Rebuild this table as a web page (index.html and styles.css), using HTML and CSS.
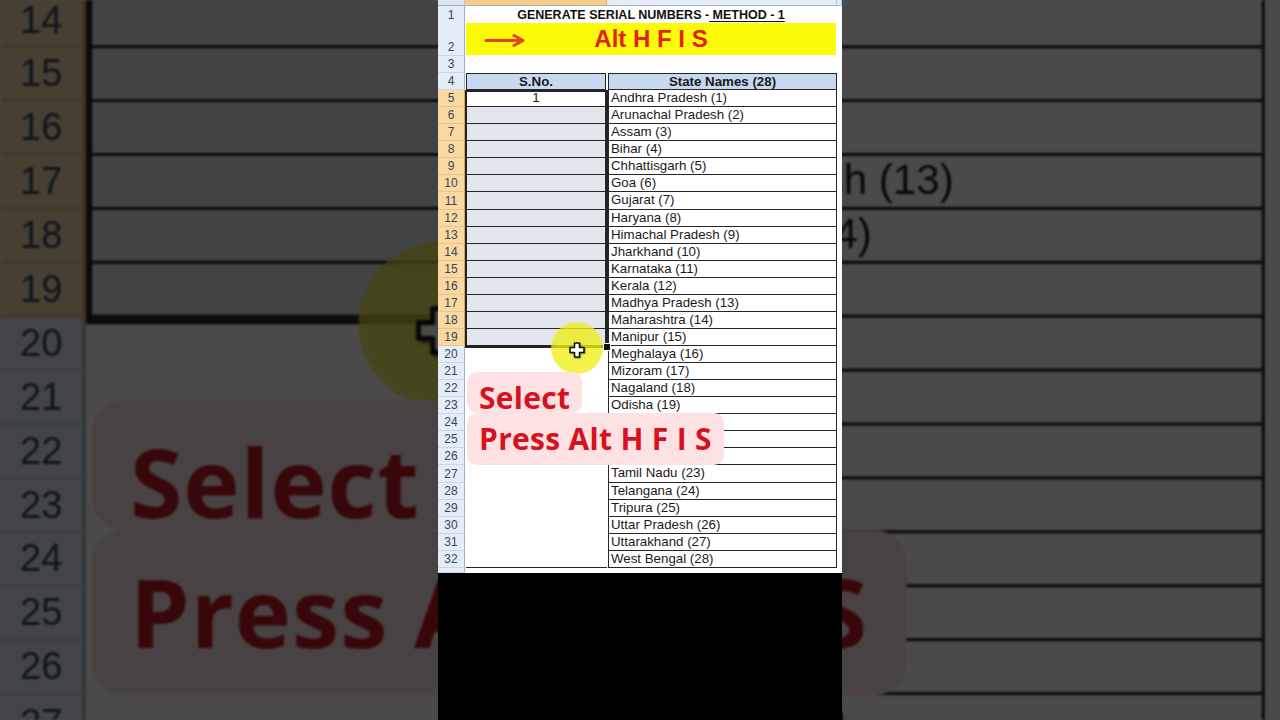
FILE: index.html
```html
<!DOCTYPE html>
<html lang="en">
<head>
<meta charset="utf-8">
<title>Generate Serial Numbers - Method 1</title>
<link rel="stylesheet" href="styles.css">
</head>
<body>
<div class="stage">
  <div class="backdrop" aria-hidden="true"></div>
  <div class="frame">
    <div class="sheet">
      <div class="row r-colhead"><div class="ch corner"></div><div class="ch ch-a"></div><div class="ch ch-b"></div><div class="ch ch-c"></div></div>
      <div class="row r1"><div class="rh">1</div><div class="title">GENERATE SERIAL NUMBERS -<span class="ul"> METHOD - 1</span></div><div class="cc"></div></div>
      <div class="row r2"><div class="rh">2</div>
        <div class="banner">
          <svg class="arrow" width="42" height="14" viewBox="0 0 42 14"><path d="M2 7.5H38" stroke="#e4432a" stroke-width="3.2" stroke-linecap="round" fill="none"/><path d="M30 2.5L39 7.5L30 12.5" stroke="#e4432a" stroke-width="3" stroke-linecap="round" stroke-linejoin="round" fill="none"/></svg>
          <span class="banner-text">Alt H F I S</span>
          <span></span>
        </div>
        <div class="cc"></div></div>
      <div class="row r3"><div class="rh">3</div><div class="ca"></div><div class="cb0"></div><div class="cc"></div></div>
      <div class="row r"><div class="rh">4</div><div class="ca box head first">S.No.</div><div class="cb head first">State Names (28)</div><div class="cc"></div></div>
      <div class="row r"><div class="rh sel">5</div><div class="ca box active">1</div><div class="cb">Andhra Pradesh (1)</div><div class="cc"></div></div>
      <div class="row r"><div class="rh sel">6</div><div class="ca box fill"></div><div class="cb">Arunachal Pradesh (2)</div><div class="cc"></div></div>
      <div class="row r"><div class="rh sel">7</div><div class="ca box fill"></div><div class="cb">Assam (3)</div><div class="cc"></div></div>
      <div class="row r"><div class="rh sel">8</div><div class="ca box fill"></div><div class="cb">Bihar (4)</div><div class="cc"></div></div>
      <div class="row r"><div class="rh sel">9</div><div class="ca box fill"></div><div class="cb">Chhattisgarh (5)</div><div class="cc"></div></div>
      <div class="row r"><div class="rh sel">10</div><div class="ca box fill"></div><div class="cb">Goa (6)</div><div class="cc"></div></div>
      <div class="row r"><div class="rh sel">11</div><div class="ca box fill"></div><div class="cb">Gujarat (7)</div><div class="cc"></div></div>
      <div class="row r"><div class="rh sel">12</div><div class="ca box fill"></div><div class="cb">Haryana (8)</div><div class="cc"></div></div>
      <div class="row r"><div class="rh sel">13</div><div class="ca box fill"></div><div class="cb">Himachal Pradesh (9)</div><div class="cc"></div></div>
      <div class="row r"><div class="rh sel">14</div><div class="ca box fill"></div><div class="cb">Jharkhand (10)</div><div class="cc"></div></div>
      <div class="row r"><div class="rh sel">15</div><div class="ca box fill"></div><div class="cb">Karnataka (11)</div><div class="cc"></div></div>
      <div class="row r"><div class="rh sel">16</div><div class="ca box fill"></div><div class="cb">Kerala (12)</div><div class="cc"></div></div>
      <div class="row r"><div class="rh sel">17</div><div class="ca box fill"></div><div class="cb">Madhya Pradesh (13)</div><div class="cc"></div></div>
      <div class="row r"><div class="rh sel">18</div><div class="ca box fill"></div><div class="cb">Maharashtra (14)</div><div class="cc"></div></div>
      <div class="row r"><div class="rh sel">19</div><div class="ca box fill"></div><div class="cb">Manipur (15)</div><div class="cc"></div></div>
      <div class="row r"><div class="rh">20</div><div class="ca"></div><div class="cb">Meghalaya (16)</div><div class="cc"></div></div>
      <div class="row r"><div class="rh">21</div><div class="ca"></div><div class="cb">Mizoram (17)</div><div class="cc"></div></div>
      <div class="row r"><div class="rh">22</div><div class="ca"></div><div class="cb">Nagaland (18)</div><div class="cc"></div></div>
      <div class="row r"><div class="rh">23</div><div class="ca"></div><div class="cb">Odisha (19)</div><div class="cc"></div></div>
      <div class="row r"><div class="rh">24</div><div class="ca"></div><div class="cb">Punjab (20)</div><div class="cc"></div></div>
      <div class="row r"><div class="rh">25</div><div class="ca"></div><div class="cb">Rajasthan (21)</div><div class="cc"></div></div>
      <div class="row r"><div class="rh">26</div><div class="ca"></div><div class="cb">Sikkim (22)</div><div class="cc"></div></div>
      <div class="row r"><div class="rh">27</div><div class="ca"></div><div class="cb">Tamil Nadu (23)</div><div class="cc"></div></div>
      <div class="row r"><div class="rh">28</div><div class="ca"></div><div class="cb">Telangana (24)</div><div class="cc"></div></div>
      <div class="row r"><div class="rh">29</div><div class="ca"></div><div class="cb">Tripura (25)</div><div class="cc"></div></div>
      <div class="row r"><div class="rh">30</div><div class="ca"></div><div class="cb">Uttar Pradesh (26)</div><div class="cc"></div></div>
      <div class="row r"><div class="rh">31</div><div class="ca"></div><div class="cb">Uttarakhand (27)</div><div class="cc"></div></div>
      <div class="row r"><div class="rh">32</div><div class="ca last"></div><div class="cb">West Bengal (28)</div><div class="cc"></div></div>
      <div class="row r-last"><div class="rh"></div><div class="ca"></div><div class="cb0"></div><div class="cc"></div></div>

      <div class="selection"><span class="handle"></span></div>
      <div class="spot"></div>
      <svg class="cursor" width="18" height="18" viewBox="0 0 18 18"><path d="M6.5 2h5v4.5H16v5h-4.5V16h-5v-4.5H2v-5h4.5z" fill="#fff" stroke="#111" stroke-width="1.6" stroke-linejoin="round"/></svg>
      <div class="caption">
        <span class="cap cap1">Select</span>
        <span class="cap cap2">Press Alt H F I S</span>
      </div>
    </div>
  </div>
</div>
<script src="script.js"></script>
</body>
</html>
```

FILE: styles.css
```css
* { box-sizing: border-box; margin: 0; padding: 0; }
html, body { width: 1280px; height: 720px; overflow: hidden; background: #000; }
body { font-family: "Liberation Sans", Arial, sans-serif; color: #1a1a1a; }

.stage {
  position: relative;
  width: 1280px;
  height: 720px;
  display: flex;
  justify-content: center;
  overflow: hidden;
  background: #4d4d4d;
}
.backdrop {
  position: absolute;
  inset: 0;
  overflow: hidden;
  filter: brightness(0.29) saturate(0.85) blur(1.3px);
}
.backdrop .sheet {
  transform-origin: 0 0;
  transform: translate(0px, -779px) scale(3.17);
}
.frame {
  position: relative;
  z-index: 1;
  width: 404px;
  height: 720px;
  background: #000;
}

.sheet {
  position: relative;
  width: 404px;
  height: 573px;
  background: #fff;
  display: flex;
  flex-direction: column;
  overflow: hidden;
}
.row {
  display: grid;
  grid-template-columns: 27px 142px 230px 5px;
  flex: none;
}
.r-colhead { height: 6px; }
.r1 { height: 17px; }
.r2 { height: 33px; }
.r3 { height: 17px; }
.r { height: 17.07px; }
.r-last { flex: 1; }

.ch { border-bottom: 1px solid #9db1c9; border-right: 1px solid #b6c6d9; background: #e5ecf5; }
.ch.corner { background: #dbe5f1; }
.ch.ch-a { background: #f7cd86; border-right-color: #d9a65a; }

.rh {
  background: #e4ecf7;
  border-right: 1px solid #9db1c9;
  border-bottom: 1px solid #c9d6e6;
  font-size: 12px;
  color: #34475f;
  display: flex;
  align-items: flex-end;
  justify-content: center;
  padding-bottom: 1px;
  line-height: 14px;
}
.rh.sel {
  background: #f9d99f;
  border-right-color: #d8a356;
  border-bottom-color: #eac388;
}

.title {
  grid-column: 2 / 4;
  text-align: center;
  font-weight: bold;
  font-size: 12.5px;
  line-height: 18px;
  color: #111;
}
.title .ul { text-decoration: underline; text-underline-offset: 2px; }

.banner {
  grid-column: 2 / 4;
  margin: 0 1px 1px 1px;
  background: #fbfb08;
  display: grid;
  grid-template-columns: 1fr auto 1fr;
  align-items: center;
}
.arrow { margin-left: 18px; margin-top: 2px; }
.banner-text {
  font-weight: bold;
  font-size: 24px;
  color: #e2231b;
  line-height: 28px;
  padding-bottom: 1px;
}

.ca { margin: 0 1px; font-size: 13.3px; text-align: center; line-height: 15px; }
.ca.box { border: 1px solid #262626; border-top: none; }
.ca.first { border-top: 1px solid #262626; }
.ca.fill { background: #e2e6ec; }
.ca.active { background: #fff; }
.ca.last { border-bottom: 1px solid #262626; margin-right: 0; }
.cb0 { margin-left: 1px; }
.cb {
  margin-left: 1px;
  border: 1px solid #262626;
  border-top: none;
  padding-left: 2px;
  font-size: 13.3px;
  line-height: 15px;
  white-space: nowrap;
  overflow: hidden;
}
.cb.first { border-top: 1px solid #262626; }
.head {
  background: #c6d9f0;
  font-weight: bold;
  text-align: center;
  padding-left: 0;
}
.cc { background: #fff; }

.selection {
  position: absolute;
  left: 27px;
  top: 89.6px;
  width: 143px;
  height: 258px;
  border: 2px solid #222;
  pointer-events: none;
}
.handle {
  position: absolute;
  right: -4px;
  bottom: -4px;
  width: 6px;
  height: 6px;
  background: #111;
  outline: 1px solid #fff;
}
.spot {
  position: absolute;
  left: 113px;
  top: 322px;
  width: 52px;
  height: 52px;
  border-radius: 50%;
  background: radial-gradient(circle, rgba(238,238,20,0.78) 60%, rgba(238,238,20,0.55) 85%, rgba(238,238,20,0) 100%);
}
.cursor {
  position: absolute;
  left: 130px;
  top: 341px;
  filter: drop-shadow(1px 1px 0 rgba(0,0,0,0.35));
}

.caption {
  position: absolute;
  left: 29px;
  top: 372px;
  display: flex;
  flex-direction: column;
  align-items: flex-start;
}
.cap {
  display: block;
  background: #fde1e3;
  border-radius: 10px;
  font-family: "Open Sans", "Noto Sans", sans-serif;
  font-weight: 700;
  font-size: 30px;
  color: #d7121e;
  letter-spacing: 0.3px;
  padding: 0 12px 0 12px;
  white-space: nowrap;
}
.cap1 { padding-top: 10px; line-height: 31px; height: 41px; }
.cap2 { line-height: 51px; height: 52px; }
```

FILE: script.js
```js
(function () {
  var src = document.querySelector('.frame .sheet');
  var copy = src.cloneNode(true);
  copy.setAttribute('aria-hidden', 'true');
  document.querySelector('.backdrop').appendChild(copy);
})();
```
